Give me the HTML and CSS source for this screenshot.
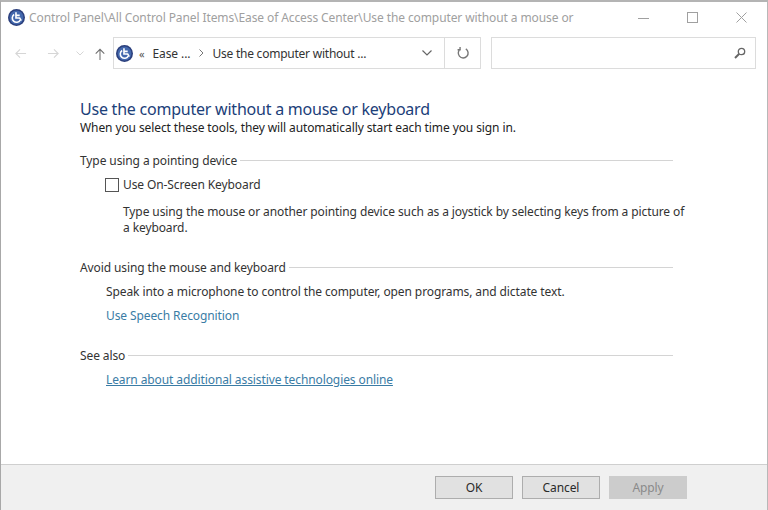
FILE: index.html
```html
<!DOCTYPE html>
<html lang="en">
<head>
<meta charset="utf-8">
<title>Use the computer without a mouse or keyboard</title>
<link rel="stylesheet" href="styles.css">
</head>
<body>
<div class="window">
  <header class="titlebar">
    <svg class="app-icon" viewBox="0 0 16 16"><use href="#ease"/></svg>
    <span class="title-text">Control Panel\All Control Panel Items\Ease of Access Center\Use the computer without a mouse or</span>
    <div class="win-controls">
      <svg class="win-btn" viewBox="0 0 11 11"><path d="M0 6.500H11"/></svg>
      <svg class="win-btn" viewBox="0 0 11 11"><rect x="0.500" y="0.500" width="10" height="10"/></svg>
      <svg class="win-btn" viewBox="0 0 11 11"><path d="M0.500 0.500L10.500 10.500M10.500 0.500L0.500 10.500"/></svg>
    </div>
  </header>
  <nav class="navbar">
    <div class="nav-arrows">
      <svg class="nav-arrow faint" viewBox="0 0 14 14"><path d="M13 7H2M6.500 2.500L2 7L6.500 11.500"/></svg>
      <svg class="nav-arrow faint" viewBox="0 0 14 14"><path d="M1 7H12M7.500 2.500L12 7L7.500 11.500"/></svg>
      <svg class="nav-caret" viewBox="0 0 8 5"><path d="M0.500 0.500L4 4L7.500 0.500"/></svg>
      <svg class="nav-arrow up" viewBox="0 0 14 14"><path d="M7 14V2M2 6.500L7 1.500L12 6.500"/></svg>
    </div>
    <div class="address">
      <svg class="addr-icon" viewBox="0 0 16 16"><use href="#ease"/></svg>
      <span class="crumb-mark">«</span>
      <span class="crumb">Ease ...</span>
      <svg class="crumb-sep" viewBox="0 0 5 8"><path d="M0.500 0.500L4 4L0.500 7.500"/></svg>
      <span class="crumb crumb-main">Use the computer without ...</span>
      <svg class="addr-caret" viewBox="0 0 10 6"><path d="M0.500 0.500L5 5L9.500 0.500"/></svg>
      <div class="refresh">
        <svg viewBox="0 0 14 14"><path d="M4 1.900A5.300 5.300 0 1 0 9.500 2M3.300 0V3H0.600"/></svg>
      </div>
    </div>
    <div class="search">
      <svg viewBox="0 0 12 12"><circle cx="7.500" cy="4.500" r="3.200"/><path class="handle" d="M5 7L1 11"/></svg>
    </div>
  </nav>
  <main class="content">
    <h1 class="heading">Use the computer without a mouse or keyboard</h1>
    <p class="subhead">When you select these tools, they will automatically start each time you sign in.</p>
    <section class="group group-first">
      <div class="group-title"><span>Type using a pointing device</span></div>
      <label class="check-row"><span class="checkbox"></span><span>Use On-Screen Keyboard</span></label>
      <p class="desc">Type using the mouse or another pointing device such as a joystick by selecting keys from a picture of a keyboard.</p>
    </section>
    <section class="group group-second">
      <div class="group-title"><span>Avoid using the mouse and keyboard</span></div>
      <p class="plain">Speak into a microphone to control the computer, open programs, and dictate text.</p>
      <a class="link" href="#">Use Speech Recognition</a>
    </section>
    <section class="group group-third">
      <div class="group-title"><span>See also</span></div>
      <a class="link underlined" href="#">Learn about additional assistive technologies online</a>
    </section>
  </main>
  <footer class="footer">
    <button class="btn" type="button">OK</button>
    <button class="btn" type="button">Cancel</button>
    <button class="btn disabled" type="button">Apply</button>
  </footer>
</div>
<svg class="defs" aria-hidden="true">
  <symbol id="ease" viewBox="0 0 16 16">
    <circle cx="8" cy="8" r="8" fill="#2b3f7c"/>
    <circle cx="8" cy="8" r="6.500" fill="#4368ad"/>
    <path d="M5.800 5.200A4 4 0 1 0 11.500 10.500" fill="none" stroke="#fff" stroke-width="1.500"/>
    <path d="M7.500 3V8.500H11L12.500 11M7.500 6H11" fill="none" stroke="#fff" stroke-width="1.500"/>
  </symbol>
</svg>
</body>
</html>
```
FILE: styles.css
```css
* { box-sizing: border-box; }
html, body { margin: 0; padding: 0; background: #fff; }
body { font-family: "Noto Sans", "Open Sans", sans-serif; font-size: 12px; letter-spacing: -0.1px; color: #333; }
.defs { width: 0; height: 0; display: block; overflow: hidden; }
.window {
  width: 768px; height: 510px; display: flex; flex-direction: column; overflow: hidden;
  border-top: 2px solid #b4b4b4; border-left: 1px solid #a8a8a8; border-right: 1px solid #b8b8b8;
}
.titlebar { height: 30px; display: flex; align-items: center; padding-left: 7px; flex: none; }
.app-icon { width: 17px; height: 17px; flex: none; margin-right: 4px; }
.title-text { color: #a0a0a0; white-space: nowrap; }
.win-controls { margin-left: auto; display: flex; align-items: center; gap: 38px; padding-right: 20px; }
.win-btn { width: 11px; height: 11px; fill: none; stroke: #a0a0a0; stroke-width: 1; }
.navbar { height: 37px; padding-top: 5px; flex: none; display: flex; align-items: center; }
.nav-arrows { width: 112px; display: flex; align-items: center; padding-left: 13px; flex: none; }
.nav-arrow { width: 13px; height: 13px; fill: none; stroke-width: 1.200; flex: none; }
.nav-arrow.faint { stroke: #d6d6d6; margin-right: 20px; }
.nav-arrow.up { stroke: #6e6e6e; width: 12px; height: 14px; margin-left: 10px; margin-top: 2px; }
.nav-caret { width: 8px; height: 5px; fill: none; stroke: #d6d6d6; flex: none; margin-left: -4px; }
.address {
  width: 368px; height: 32px; border: 1px solid #dcdcdc; display: flex; align-items: center;
  padding-left: 2px; flex: none;
}
.addr-icon { width: 17px; height: 17px; flex: none; margin-right: 6px; }
.crumb-mark { color: #555; font-size: 11px; margin-right: 8px; }
.crumb { color: #333; white-space: nowrap; }
.crumb-main { letter-spacing: -0.23px; }
.crumb-sep { width: 5px; height: 8px; fill: none; stroke: #777; margin: 0 8px 0 9px; flex: none; }
.addr-caret { width: 10px; height: 6px; fill: none; stroke: #666; stroke-width: 1.200; margin-left: auto; margin-right: 12px; flex: none; }
.refresh { width: 36px; height: 100%; border-left: 1px solid #dcdcdc; display: flex; align-items: center; justify-content: center; flex: none; }
.refresh svg { width: 13px; height: 13px; fill: none; stroke: #777; stroke-width: 1.500; margin-left: 1px; }
.search {
  width: 265px; height: 32px; border: 1px solid #dcdcdc; margin-left: 10px; display: flex;
  align-items: center; justify-content: flex-end; padding-right: 9px; flex: none;
}
.search svg { width: 12px; height: 12px; fill: none; stroke: #666; stroke-width: 1.300; }
.search .handle { stroke-width: 2; }
.content { flex: 1; padding: 30px 0 0 79px; min-height: 0; }
.heading { margin: 0; font-size: 16px; font-weight: 400; letter-spacing: -0.23px; line-height: 20px; color: #1c4079; white-space: nowrap; }
.subhead { margin: 0; line-height: 17px; color: #222; white-space: nowrap; }
.group { width: 593px; }
.group-first { margin-top: 16px; }
.group-second { margin-top: 23px; }
.group-third { margin-top: 23px; }
.group-title { display: flex; align-items: center; gap: 3px; line-height: 17px; white-space: nowrap; }
.group-title::after { content: ""; flex: 1; height: 1px; background: #d4d4d4; }
.check-row { display: flex; align-items: center; gap: 4px; margin: 7px 0 0 25px; line-height: 17px; }
.checkbox { width: 14px; height: 14px; border: 1px solid #555; background: #fff; flex: none; }
.desc { margin: 11px 0 0 43px; width: 570px; line-height: 16px; }
.plain { margin: 7px 0 0 26px; line-height: 17px; white-space: nowrap; }
.link { display: block; margin: 7px 0 0 26px; line-height: 17px; color: #3a7ca5; text-decoration: none; white-space: nowrap; }
.link.underlined { text-decoration: underline; }
.footer {
  height: 46px; flex: none; background: #f0f0f0; border-top: 1px solid #cfcfcf; display: flex;
  align-items: center; justify-content: flex-end; gap: 9px; padding: 0 80px 0 0;
}
.btn {
  width: 78px; height: 23px; background: #e1e1e1; border: 1px solid #adadad; font: inherit;
  letter-spacing: inherit; color: #2a2a2a; padding: 0;
}
.btn.disabled { background: #cccccc; border-color: #cccccc; color: #8a8a8a; }
```
